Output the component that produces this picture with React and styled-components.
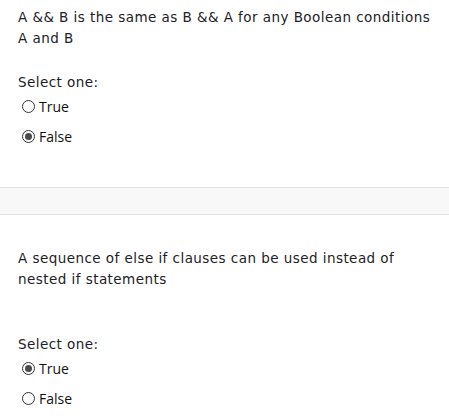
import React, { useState } from 'react'
import styled, { createGlobalStyle } from 'styled-components'

const GlobalStyle = createGlobalStyle`
  html, body {
    margin: 0;
    padding: 0;
    background: #fff;
  }
  body {
    font-family: "DejaVu Sans", Verdana, sans-serif;
    color: #1d2125;
  }
`

const questions = [
  {
    id: 1,
    text: 'A && B is the same as B && A for any Boolean conditions A and B',
    answer: 'False',
    gap: 23,
  },
  {
    id: 2,
    text: 'A sequence of else if clauses can be used instead of nested if statements',
    answer: 'True',
    gap: 44,
  },
]

const Page = styled.main`
  width: 449px;
`

const Question = styled.section`
  padding: 7px 16px 0 18px;
`

const Prompt = styled.p`
  margin: 0;
  font-family: "DejaVu Sans", Verdana, sans-serif;
  font-size: 13.5px;
  letter-spacing: 0.45px;
  line-height: 21px;
`

const Label = styled.div`
  margin-top: ${(p) => p.$gap}px;
  font-family: "DejaVu Sans", Verdana, sans-serif;
  font-size: 13.5px;
  letter-spacing: 0.45px;
  line-height: 20px;
`

const Options = styled.div`
  display: flex;
  flex-direction: column;
  gap: 10px;
  padding: 4px 0 0 4px;
`

const Option = styled.label`
  display: flex;
  align-items: center;
  gap: 4px;
  height: 20px;
  font-family: "Open Sans", "Liberation Sans", sans-serif;
  font-size: 14px;
  color: #111;
  cursor: pointer;
`

const Radio = styled.span`
  width: 13px;
  height: 13px;
  box-sizing: border-box;
  border-radius: 50%;
  border: 1px solid #333;
  background: #fff;
  display: flex;
  align-items: center;
  justify-content: center;
  &::after {
    content: '';
    width: 7px;
    height: 7px;
    border-radius: 50%;
    background: ${(p) => (p.$checked ? '#4a4a4a' : 'transparent')};
  }
`

const Divider = styled.div`
  margin-top: 41px;
  height: 26px;
  background: #f8f8f8;
  border-top: 1px solid #e2e2e2;
  border-bottom: 1px solid #e2e2e2;
  margin-bottom: 26px;
`

const QuestionBlock = ({ text, answer, gap }) => {
  const [value, setValue] = useState(answer)
  return (
    <Question>
      <Prompt>{text}</Prompt>
      <Label $gap={gap}>Select one:</Label>
      <Options>
        {['True', 'False'].map((opt) => (
          <Option key={opt} onClick={() => setValue(opt)}>
            <Radio $checked={value === opt} />
            {opt}
          </Option>
        ))}
      </Options>
    </Question>
  )
}

const App = () => {
  return (
    <Page>
      <GlobalStyle />
      <QuestionBlock {...questions[0]} />
      <Divider />
      <QuestionBlock {...questions[1]} />
    </Page>
  )
}

export default App
